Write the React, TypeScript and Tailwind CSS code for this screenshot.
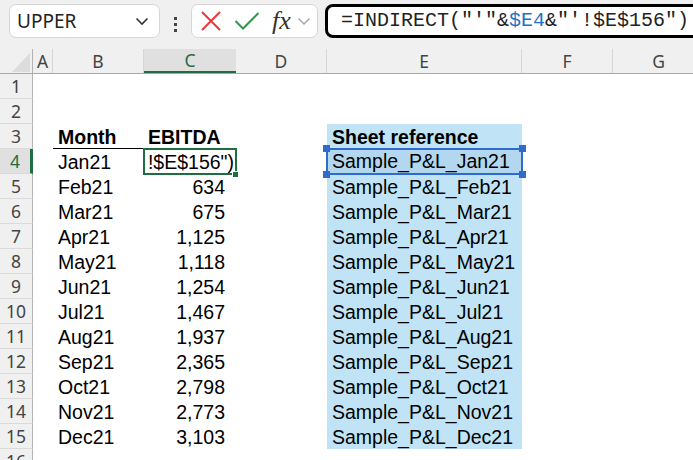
import React from "react";

const cols = ["A", "B", "C", "D", "E", "F", "G"];
const gridCols = "grid grid-cols-[33px_20px_91px_92px_91px_195px_91px_92px]";

const rows: { month: string; value: string; sheet: string }[] = [
  { month: "Jan21", value: "", sheet: "Sample_P&L_Jan21" },
  { month: "Feb21", value: "634", sheet: "Sample_P&L_Feb21" },
  { month: "Mar21", value: "675", sheet: "Sample_P&L_Mar21" },
  { month: "Apr21", value: "1,125", sheet: "Sample_P&L_Apr21" },
  { month: "May21", value: "1,118", sheet: "Sample_P&L_May21" },
  { month: "Jun21", value: "1,254", sheet: "Sample_P&L_Jun21" },
  { month: "Jul21", value: "1,467", sheet: "Sample_P&L_Jul21" },
  { month: "Aug21", value: "1,937", sheet: "Sample_P&L_Aug21" },
  { month: "Sep21", value: "2,365", sheet: "Sample_P&L_Sep21" },
  { month: "Oct21", value: "2,798", sheet: "Sample_P&L_Oct21" },
  { month: "Nov21", value: "2,773", sheet: "Sample_P&L_Nov21" },
  { month: "Dec21", value: "3,103", sheet: "Sample_P&L_Dec21" },
];

function RowHead({ n, active }: { n: number; active?: boolean }) {
  return (
    <div
      className={`flex items-center justify-center border-b border-[#dadada] pt-[2px] font-['Noto_Sans',sans-serif] text-[17.5px] leading-none ${
        active
          ? "bg-[#e0e0e0] text-[#1e6e42] border-r-[3px] border-r-[#1e6e42]"
          : "bg-[#f0f0f0] text-[#444] border-r border-r-[#b4b4b4]"
      }`}
    >
      {n}
    </div>
  );
}

function Handle({ className }: { className: string }) {
  return <span className={`absolute h-[7px] w-[7px] bg-[#2f6bcc] ${className}`} />;
}

export default function App() {
  return (
    <div className="h-[460px] w-[693px] overflow-hidden bg-white font-['Liberation_Sans',Arial,sans-serif] text-black">
      {/* Formula toolbar */}
      <div className="flex h-[49px] items-start bg-[#f0f0f0] pt-[4px] font-['Noto_Sans',sans-serif]">
        <div className="ml-[9px] flex h-[34px] w-[151px] shrink-0 items-center justify-between rounded-[7px] border border-[#d6d6d6] bg-white pl-[7px] pr-[10px]">
          <span className="text-[19px] text-[#222]">UPPER</span>
          <svg width="14" height="9" viewBox="0 0 14 9">
            <path d="M1.5 1.5 L7 7 L12.5 1.5" fill="none" stroke="#333" strokeWidth="1.6" />
          </svg>
        </div>
        <div className="flex w-[31px] shrink-0 flex-col items-center gap-[3px] pt-[13px]">
          <span className="h-[3px] w-[3px] bg-[#444]" />
          <span className="h-[3px] w-[3px] bg-[#444]" />
          <span className="h-[3px] w-[3px] bg-[#444]" />
        </div>
        <div className="flex h-[34px] w-[127px] shrink-0 items-center rounded-[7px] border border-[#d6d6d6] bg-white pl-[8px]">
          <svg width="22" height="22" viewBox="0 0 22 22">
            <path d="M2 2 L20 20 M20 2 L2 20" stroke="#e8393c" strokeWidth="2" />
          </svg>
          <svg className="ml-[12px]" width="26" height="20" viewBox="0 0 26 20">
            <path d="M1.5 10 L9 17.5 L24.5 2" fill="none" stroke="#2f9a4c" strokeWidth="2" />
          </svg>
          <span className="ml-[12px] font-['Liberation_Serif',serif] text-[26px] italic leading-none text-[#333]">
            fx
          </span>
          <svg className="ml-[6px]" width="14" height="9" viewBox="0 0 14 9">
            <path d="M1.5 1.5 L7 7 L12.5 1.5" fill="none" stroke="#a8a8a8" strokeWidth="1.5" />
          </svg>
        </div>
        <div className="ml-[7px] flex h-[34px] w-[390px] shrink-0 items-center rounded-l-[8px] border-[3px] border-black bg-white pl-[13px] font-['Liberation_Mono',monospace] text-[20px] whitespace-nowrap text-[#222]">
          =INDIRECT("'"&amp;<span className="text-[#1f72c6]">$E4</span>&amp;"'!$E$156")
        </div>
      </div>

      {/* Column headers */}
      <div className={`${gridCols} h-[25px] border-b border-[#a9a9a9] bg-[#f0f0f0] font-['Noto_Sans',sans-serif] text-[17.5px] leading-none text-[#444]`}>
        <div className="relative border-r border-[#b4b4b4]">
          <svg className="absolute left-0 top-0" width="33" height="25" viewBox="0 0 33 25">
            <path d="M12 23 L30 23 L30 4 Z" fill="#dcdcdc" />
          </svg>
        </div>
        {cols.map((c) =>
          c === "C" ? (
            <div
              key={c}
              className="flex items-center justify-center border-b-[2px] border-[#1e6e42] bg-[#e0e0e0] pt-[2px] text-[#1e6e42]"
            >
              {c}
            </div>
          ) : (
            <div key={c} className="flex items-center justify-center border-r border-[#d6d6d6] pt-[2px]">
              {c}
            </div>
          )
        )}
      </div>

      {/* Sheet body */}
      <div className={`${gridCols} auto-rows-[25px] text-[19.5px] leading-none`}>
        <RowHead n={1} />
        <div className="col-span-7" />
        <RowHead n={2} />
        <div className="col-span-7" />

        <RowHead n={3} />
        <div />
        <div className="flex items-center border-b border-black pl-[5px] pt-[3px] font-bold">Month</div>
        <div className="flex items-center pl-[4px] pt-[3px] font-bold">EBITDA</div>
        <div />
        <div className="flex items-center bg-[#c0e4f5] pl-[5px] pt-[3px] font-bold">Sheet reference</div>
        <div className="col-span-2" />

        {rows.map((r, i) => {
          const first = i === 0;
          return (
            <React.Fragment key={r.month}>
              <RowHead n={i + 4} active={first} />
              <div />
              <div className="flex items-center pl-[5px] pt-[3px]">{r.month}</div>
              {first ? (
                <div className="relative flex items-center justify-end whitespace-nowrap pr-[2px] pt-[3px]">
                  <span className="absolute inset-[-1px] border-[2px] border-[#1e6e42]" />
                  <span className="absolute bottom-[-4px] right-[-3px] h-[7px] w-[7px] border border-white bg-[#1e6e42]" />
                  !$E$156")
                </div>
              ) : (
                <div className="flex items-center justify-end pr-[11px] pt-[3px]">{r.value}</div>
              )}
              <div />
              {first ? (
                <div className="relative flex items-center bg-[#b3d7ef] pl-[5px] pt-[1px]">
                  <span className="absolute inset-[-1px] border-[2px] border-[#2f6bcc]" />
                  <Handle className="left-[-4px] top-[-4px]" />
                  <Handle className="right-[-4px] top-[-4px]" />
                  <Handle className="bottom-[-4px] left-[-4px]" />
                  <Handle className="bottom-[-4px] right-[-4px]" />
                  <span className="relative">{r.sheet}</span>
                </div>
              ) : (
                <div className="flex items-center bg-[#c0e4f5] pl-[5px] pt-[3px]">{r.sheet}</div>
              )}
              <div className="col-span-2" />
            </React.Fragment>
          );
        })}

        <RowHead n={16} />
        <div className="col-span-7" />
      </div>
    </div>
  );
}
